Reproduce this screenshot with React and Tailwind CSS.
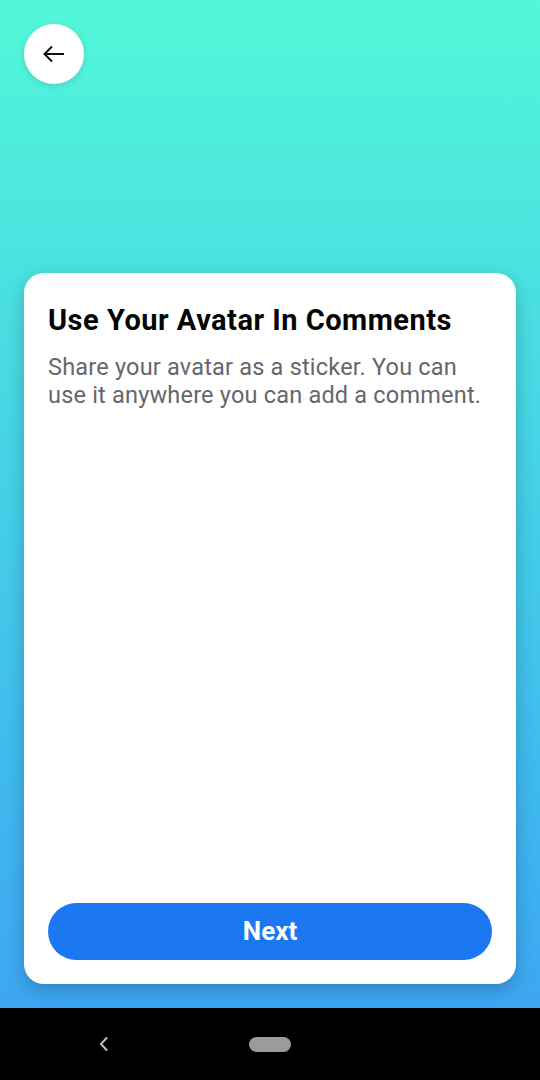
// App.jsx
// Avatar sticker intro screen: gradient backdrop, back button,
// white card with title, description and a "Next" button,
// plus the Android navigation bar at the bottom.

function BackArrow() {
  return (
    <svg width="22" height="18" viewBox="0 0 22 18" fill="none">
      <path
        d="M21 9H1.8M9 1.5 1.5 9 9 16.5"
        stroke="#111"
        strokeWidth="2"
        strokeLinecap="butt"
        strokeLinejoin="miter"
      />
    </svg>
  );
}

function NavBar() {
  return (
    <div className="h-[72px] bg-black relative flex items-center justify-center">
      {/* back chevron */}
      <svg
        className="absolute left-[98px] top-[28px]"
        width="12"
        height="16"
        viewBox="0 0 12 16"
        fill="none"
      >
        <path d="M9 1.5 3 8l6 6.5" stroke="#bdbdbd" strokeWidth="2" />
      </svg>
      {/* home pill */}
      <div className="w-[42px] h-[15px] rounded-full bg-[#9b9b9b]" />
    </div>
  );
}

export default function App() {
  return (
    <div
      className="w-[540px] h-[1080px] flex flex-col overflow-hidden"
      style={{ fontFamily: "Roboto, 'Liberation Sans', sans-serif" }}
    >
      <div className="flex-1 flex flex-col bg-gradient-to-b from-[#53f7d8] to-[#3da6f3]">
        {/* Header area */}
        <div className="h-[273px] pt-6 pl-6">
          <button className="w-[60px] h-[60px] rounded-full bg-white flex items-center justify-center shadow-[0_2px_6px_rgba(0,0,0,0.12)]">
            <BackArrow />
          </button>
        </div>

        {/* Card */}
        <div className="flex-1 mx-6 mb-6 bg-white rounded-[20px] shadow-[0_6px_18px_rgba(0,0,0,0.22)] flex flex-col px-6 pt-[30px] pb-6">
          <h1 className="text-[29px] leading-[34px] tracking-[0.5px] font-bold text-[#050505]">
            Use Your Avatar In Comments
          </h1>
          <p className="mt-4 text-[23.5px] leading-[28px] tracking-[0.2px] text-[#65676b]">
            Share your avatar as a sticker. You can use it anywhere you can add a comment.
          </p>

          <div className="flex-1" />

          <button className="h-[57px] w-full rounded-full bg-[#1b77f2] text-white text-[26px] font-bold">
            Next
          </button>
        </div>
      </div>

      <NavBar />
    </div>
  );
}
